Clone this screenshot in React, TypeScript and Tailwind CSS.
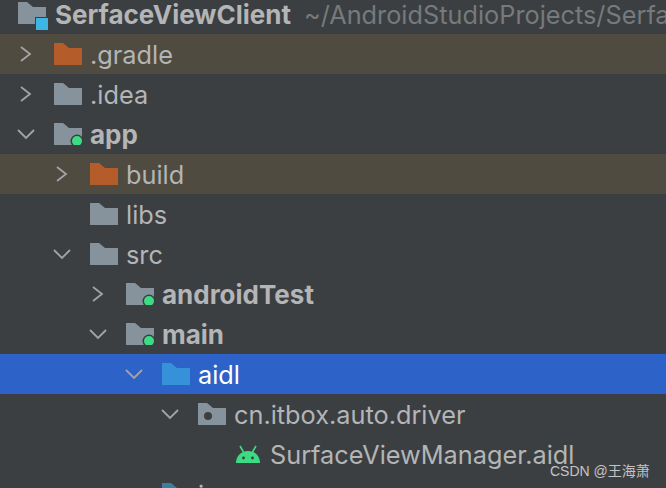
import React from "react";

type Kind = "plain" | "orange" | "module" | "blue" | "package" | "android" | "teal";

interface RowItem {
  label: string;
  indent: number;
  arrow?: "right" | "down";
  kind: Kind;
  bold?: boolean;
  excluded?: boolean;
  selected?: boolean;
}

const rows: RowItem[] = [
  { label: ".gradle", indent: 0, arrow: "right", kind: "orange", excluded: true },
  { label: ".idea", indent: 0, arrow: "right", kind: "plain" },
  { label: "app", indent: 0, arrow: "down", kind: "module", bold: true },
  { label: "build", indent: 36, arrow: "right", kind: "orange", excluded: true },
  { label: "libs", indent: 36, kind: "plain" },
  { label: "src", indent: 36, arrow: "down", kind: "plain" },
  { label: "androidTest", indent: 72, arrow: "right", kind: "module", bold: true },
  { label: "main", indent: 72, arrow: "down", kind: "module", bold: true },
  { label: "aidl", indent: 108, arrow: "down", kind: "blue", selected: true },
  { label: "cn.itbox.auto.driver", indent: 144, arrow: "down", kind: "package" },
  { label: "SurfaceViewManager.aidl", indent: 180, kind: "android" },
  { label: "java", indent: 108, arrow: "down", kind: "teal" },
];

const folderPath = "M0 0H9L15 5H28V22H0Z";

const Folder = ({ color, children }: { color: string; children?: React.ReactNode }) => (
  <svg width="28" height="22" viewBox="0 0 28 22" className="block">
    <path d={folderPath} fill={color} />
    {children}
  </svg>
);

const Arrow = ({ dir }: { dir: "right" | "down" }) => (
  <svg width="20" height="20" viewBox="0 0 20 20" fill="none" stroke="#a2a4a6" strokeWidth="1.8">
    {dir === "right" ? <path d="M5 3L14 10L5 17" /> : <path d="M2 6L10 14L18 6" />}
  </svg>
);

const Icon = ({ kind }: { kind: Kind }) => {
  if (kind === "orange") return <Folder color="#b55c2b" />;
  if (kind === "blue") return <Folder color="#3592d8" />;
  if (kind === "teal") return <Folder color="#3a7f9c" />;
  if (kind === "plain") return <Folder color="#87939c" />;
  if (kind === "module")
    return (
      <Folder color="#87939c">
        <circle cx="23" cy="18" r="6.5" fill="#3c3f41" />
        <circle cx="23" cy="18" r="5" fill="#3ddc84" />
      </Folder>
    );
  if (kind === "package")
    return (
      <Folder color="#87939c">
        <circle cx="10" cy="13" r="4" fill="#3c3f41" />
      </Folder>
    );
  return (
    <svg width="28" height="22" viewBox="0 0 28 22" className="block">
      <path d="M2 20C2 13 7 8 14 8S26 13 26 20H2Z" fill="#3ddc84" />
      <path d="M6 3L9.5 9M22 3L18.5 9" stroke="#3ddc84" strokeWidth="1.6" />
      <circle cx="9.5" cy="15" r="1.4" fill="#3c3f41" />
      <circle cx="18.5" cy="15" r="1.4" fill="#3c3f41" />
    </svg>
  );
};

const Row = ({ item }: { item: RowItem }) => {
  const bg = item.selected ? "bg-[#2d62c8]" : item.excluded ? "bg-[#4f4b41]" : "";
  return (
    <div className={`flex h-10 shrink-0 items-center ${bg}`}>
      <div style={{ width: item.indent }} className="shrink-0" />
      <div className="flex w-[54px] shrink-0 justify-center pr-[2px]">
        {item.arrow && <Arrow dir={item.arrow} />}
      </div>
      <Icon kind={item.kind} />
      <span
        className={`ml-2 whitespace-nowrap pt-[2px] leading-none ${
          item.selected ? "text-white" : "text-[#b3b5b6]"
        } ${item.bold ? "text-[26px] font-bold" : "text-[25.3px]"}`}
      >
        {item.label}
      </span>
    </div>
  );
};

export default function App() {
  return (
    <div className="relative h-[488px] w-[666px] overflow-hidden bg-[#3c3f41] font-['Inter',sans-serif]">
      <div className="flex h-[34px] items-start pl-[18px]">
        <svg width="30" height="28" viewBox="0 0 30 28" className="mt-[2px] shrink-0">
          <path d="M0 0H9L15 5H28V22H0Z" fill="#87939c" />
          <rect x="17" y="15" width="13" height="13" fill="#3c3f41" />
          <rect x="18" y="16" width="12" height="12" fill="#3fb5e6" />
        </svg>
        <span className="ml-[7px] mt-[2px] whitespace-nowrap text-[26px] font-bold leading-none text-[#b3b5b6]">
          SerfaceViewClient
        </span>
        <span className="ml-[13px] mt-[2px] whitespace-nowrap text-[25.3px] leading-none text-[#767a7c]">
          ~/AndroidStudioProjects/Serfa
        </span>
      </div>
      {rows.map((item) => (
        <Row key={item.label} item={item} />
      ))}
      <div className="absolute left-[550px] top-[464px] whitespace-nowrap font-['Liberation_Sans','Noto_Sans_CJK_SC',sans-serif] text-[14px] leading-none text-[#c4c4c4]">
        CSDN @王海萧
      </div>
    </div>
  );
}
